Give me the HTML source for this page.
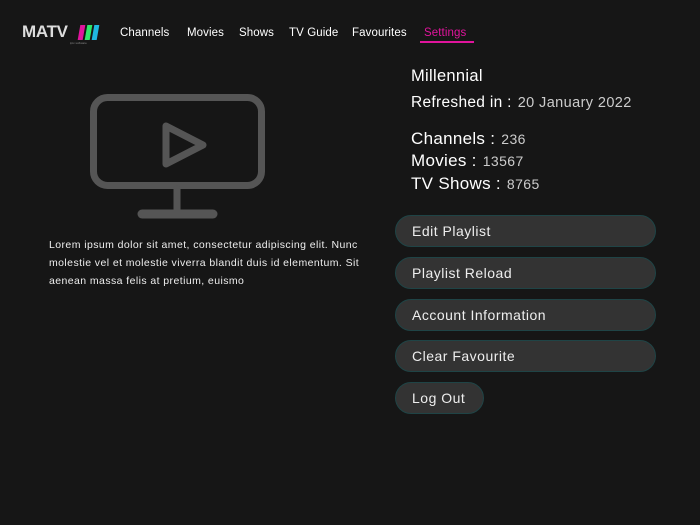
<!DOCTYPE html>
<html><head><meta charset="utf-8"><style>
body{margin:0;width:700px;height:525px;background:#161616;font-family:"Liberation Sans",sans-serif;color:#fff;position:relative;overflow:hidden}
.a{position:absolute;white-space:nowrap}
.nav{font-size:11.5px;top:27px;letter-spacing:0.1px}
.btn{position:absolute;left:395px;height:32px;border:1px solid #1f4446;border-radius:17px;background:#333;box-sizing:border-box;font-size:14px;line-height:30px;padding-left:16px;color:#eee;letter-spacing:0.5px}
.v{color:#ccc;font-size:14px;margin-left:6px;letter-spacing:0.4px}
</style></head><body>
<div class="a" style="left:22px;top:22px;font-weight:bold;font-size:17px;letter-spacing:-0.3px;color:#ddd">MATV</div>
<div class="a" style="left:79px;top:25px;width:5px;height:15px;background:#e0149c;transform:skewX(-10deg)"></div>
<div class="a" style="left:86px;top:25px;width:5px;height:15px;background:#2ee86a;transform:skewX(-10deg)"></div>
<div class="a" style="left:93px;top:25px;width:5px;height:15px;background:#1fb8e0;transform:skewX(-10deg)"></div>
<div class="a" style="left:70px;top:41px;font-size:3px;color:#888">iptv software</div>
<div class="a nav" style="left:120px">Channels</div>
<div class="a nav" style="left:187px">Movies</div>
<div class="a nav" style="left:239px">Shows</div>
<div class="a nav" style="left:289px">TV Guide</div>
<div class="a nav" style="left:352px">Favourites</div>
<div class="a nav" style="left:424px;color:#e0149c">Settings</div>
<div class="a" style="left:420px;top:41px;width:54px;height:2px;background:#e0149c"></div>
<svg class="a" style="left:0;top:0" width="300" height="230"><g fill="none" stroke="#555" stroke-width="7" stroke-linecap="round" stroke-linejoin="round"><rect x="93.5" y="97.5" width="168" height="88" rx="14"/><path d="M166 126V164L203 145Z"/><path d="M177 189V212" /></g><path d="M142 214H213" stroke="#555" stroke-width="9" stroke-linecap="round"/></svg>
<div class="a" style="left:49px;top:236px;font-size:10.5px;line-height:18px;color:#eee;letter-spacing:0.42px">Lorem ipsum dolor sit amet, consectetur adipiscing elit. Nunc<br>molestie vel et molestie viverra blandit duis id elementum. Sit<br>aenean massa felis at pretium, euismo</div>
<div class="a" style="left:411px;top:67px;font-size:16.5px;letter-spacing:0.3px">Millennial</div>
<div class="a" style="left:411px;top:94px;font-size:15.5px;letter-spacing:0.3px">Refreshed in :<span class="v" style="font-size:14.5px">20 January 2022</span></div>
<div class="a" style="left:411px;top:129px;font-size:17px;letter-spacing:0.3px">Channels :<span class="v">236</span></div>
<div class="a" style="left:411px;top:151px;font-size:17px;letter-spacing:0.3px">Movies :<span class="v">13567</span></div>
<div class="a" style="left:411px;top:174px;font-size:17px;letter-spacing:0.3px">TV Shows :<span class="v">8765</span></div>
<div class="btn" style="top:215px;width:261px">Edit Playlist</div>
<div class="btn" style="top:257px;width:261px">Playlist Reload</div>
<div class="btn" style="top:299px;width:261px">Account Information</div>
<div class="btn" style="top:340px;width:261px">Clear Favourite</div>
<div class="btn" style="top:382px;width:89px">Log Out</div>
</body></html>
